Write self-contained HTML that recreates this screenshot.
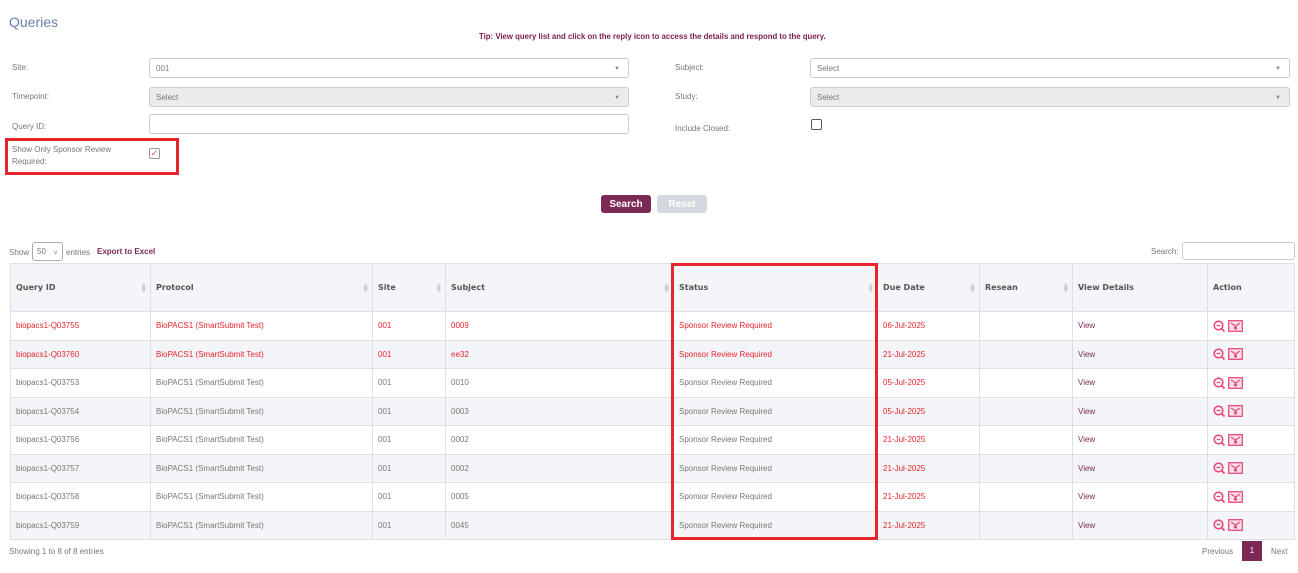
<!DOCTYPE html>
<html><head><meta charset="utf-8"><style>
*{box-sizing:border-box;margin:0;padding:0}
body{width:1298px;height:573px;background:#fff;font-family:"Liberation Sans",sans-serif;position:relative;overflow:hidden;color:#777}
.a{position:absolute}
.lbl{font-size:8px;color:#777}
.inp{position:absolute;border:1px solid #ccc;border-radius:3px;height:20px;font-size:8px;color:#777;padding:5px 0 0 6px;background:#fff}
.dis{background:#ebebeb}
.arr{position:absolute;right:8px;top:7px;font-size:6px;color:#888}
table{position:absolute;left:10px;top:263px;border-collapse:collapse;width:1284px;font-size:8px;table-layout:fixed}
td,th{border:1px solid #dde0e4;padding:0 5px;text-align:left;height:28.5px}
th{height:48px;background:#f3f5f8;color:#555;font-weight:bold;font-family:"DejaVu Sans",sans-serif;font-size:8px;position:relative}
th .s{position:absolute;right:4px;top:19px;font-size:6px;color:#ccc;line-height:5px}
tr.g td{background:#f3f5f8}
.r td{color:#e8242c}
.d{color:#e8242c}
.v{color:#7b2a55}
.ic{display:inline-block;vertical-align:middle}
</style></head><body>
<div class="a" style="left:9px;top:14px;font-size:14px;color:#6a80a8">Queries</div>
<div class="a" style="left:479px;top:32px;font-size:7.8px;color:#7b1e4e;font-weight:bold">Tip: View query list and click on the reply icon to access the details and respond to the query.</div>

<div class="a lbl" style="left:12px;top:63px">Site:</div>
<div class="inp" style="left:149px;top:58px;width:480px">001<span class="arr">▼</span></div>
<div class="a lbl" style="left:12px;top:92px">Timepoint:</div>
<div class="inp dis" style="left:149px;top:87px;width:480px">Select<span class="arr">▼</span></div>
<div class="a lbl" style="left:12px;top:122px">Query ID:</div>
<div class="inp" style="left:149px;top:114px;width:480px"></div>

<div class="a lbl" style="left:675px;top:63px">Subject:</div>
<div class="inp" style="left:810px;top:58px;width:480px">Select<span class="arr">▼</span></div>
<div class="a lbl" style="left:675px;top:92px">Study:</div>
<div class="inp dis" style="left:810px;top:87px;width:480px">Select<span class="arr">▼</span></div>
<div class="a lbl" style="left:675px;top:124px">Include Closed:</div>
<div class="a" style="left:811px;top:119px;width:11px;height:11px;border:1px solid #555;border-radius:2px"></div>

<div class="a" style="left:5px;top:138px;width:174px;height:37px;border:3px solid #e8242c"></div>
<div class="a lbl" style="left:12px;top:144px;line-height:12px">Show Only Sponsor Review<br>Required:</div>
<div class="a" style="left:149px;top:148px;width:11px;height:11px;border:1px solid #999;border-radius:2px;font-size:9px;color:#e8446c;line-height:9px;text-align:center">✓</div>

<div class="a" style="left:601px;top:195px;width:50px;height:18px;background:#7b2a55;border-radius:3px;color:#fff;font-size:10px;font-weight:bold;text-align:center;line-height:19px">Search</div>
<div class="a" style="left:657px;top:195px;width:50px;height:18px;background:#d4d8df;border-radius:3px;color:#fff;font-size:10px;font-weight:bold;text-align:center;line-height:19px">Reset</div>

<div class="a lbl" style="left:9px;top:248px">Show</div>
<div class="a" style="left:32px;top:242px;width:31px;height:19px;border:1px solid #aaa;border-radius:3px;font-size:8px;padding:4px 0 0 4px">50 <span style="font-size:6px;margin-left:6px">v</span></div>
<div class="a lbl" style="left:66px;top:248px">entries</div>
<div class="a" style="left:97px;top:247px;font-size:8px;font-weight:bold;color:#7b2a55">Export to Excel</div>
<div class="a lbl" style="left:1151px;top:247px">Search:</div>
<div class="a" style="left:1182px;top:242px;width:113px;height:18px;border:1px solid #ccc;border-radius:3px"></div>

<table>
<colgroup><col style="width:140px"><col style="width:222px"><col style="width:73px"><col style="width:228px"><col style="width:204px"><col style="width:102px"><col style="width:93px"><col style="width:135px"><col style="width:87px"></colgroup>
<tr><th>Query ID<span class="s">▲<br>▼</span></th><th>Protocol<span class="s">▲<br>▼</span></th><th>Site<span class="s">▲<br>▼</span></th><th>Subject<span class="s">▲<br>▼</span></th><th>Status<span class="s">▲<br>▼</span></th><th>Due Date<span class="s">▲<br>▼</span></th><th>Resean<span class="s">▲<br>▼</span></th><th>View Details</th><th>Action</th></tr>
<tr class="r"><td>biopacs1-Q03755</td><td>BioPACS1 (SmartSubmit Test)</td><td>001</td><td>0009</td><td>Sponsor Review Required</td><td>06-Jul-2025</td><td></td><td class="v" style="color:#7b2a55">View</td><td>ICON</td></tr>
<tr class="r g"><td>biopacs1-Q03760</td><td>BioPACS1 (SmartSubmit Test)</td><td>001</td><td>ee32</td><td>Sponsor Review Required</td><td>21-Jul-2025</td><td></td><td style="color:#7b2a55">View</td><td>ICON</td></tr>
<tr><td>biopacs1-Q03753</td><td>BioPACS1 (SmartSubmit Test)</td><td>001</td><td>0010</td><td>Sponsor Review Required</td><td class="d">05-Jul-2025</td><td></td><td class="v">View</td><td>ICON</td></tr>
<tr class="g"><td>biopacs1-Q03754</td><td>BioPACS1 (SmartSubmit Test)</td><td>001</td><td>0003</td><td>Sponsor Review Required</td><td class="d">05-Jul-2025</td><td></td><td class="v">View</td><td>ICON</td></tr>
<tr><td>biopacs1-Q03756</td><td>BioPACS1 (SmartSubmit Test)</td><td>001</td><td>0002</td><td>Sponsor Review Required</td><td class="d">21-Jul-2025</td><td></td><td class="v">View</td><td>ICON</td></tr>
<tr class="g"><td>biopacs1-Q03757</td><td>BioPACS1 (SmartSubmit Test)</td><td>001</td><td>0002</td><td>Sponsor Review Required</td><td class="d">21-Jul-2025</td><td></td><td class="v">View</td><td>ICON</td></tr>
<tr><td>biopacs1-Q03758</td><td>BioPACS1 (SmartSubmit Test)</td><td>001</td><td>0005</td><td>Sponsor Review Required</td><td class="d">21-Jul-2025</td><td></td><td class="v">View</td><td>ICON</td></tr>
<tr class="g"><td>biopacs1-Q03759</td><td>BioPACS1 (SmartSubmit Test)</td><td>001</td><td>0045</td><td>Sponsor Review Required</td><td class="d">21-Jul-2025</td><td></td><td class="v">View</td><td>ICON</td></tr>
</table>
<div class="a" style="left:671px;top:263px;width:207px;height:277px;border:3px solid #e8242c"></div>

<div class="a lbl" style="left:9px;top:547px">Showing 1 to 8 of 8 entries</div>
<div class="a lbl" style="left:1202px;top:547px">Previous</div>
<div class="a" style="left:1242px;top:541px;width:20px;height:20px;background:#7b2a55;color:#fff;font-size:8px;text-align:center;line-height:20px">1</div>
<div class="a lbl" style="left:1271px;top:547px">Next</div>
<script>
var ic='<svg class="ic" width="13" height="12" viewBox="0 0 13 12"><circle cx="5.5" cy="5.5" r="4.3" fill="none" stroke="#e84a7a" stroke-width="1.6"/><line x1="3.5" y1="5.5" x2="7.5" y2="5.5" stroke="#e84a7a" stroke-width="1.3"/><line x1="8.5" y1="8.5" x2="11.5" y2="11.5" stroke="#e84a7a" stroke-width="1.8"/></svg> <svg class="ic" width="15" height="12" viewBox="0 0 15 12"><rect x="0.7" y="0.7" width="13.6" height="10.6" fill="#fbe0ea" stroke="#e84a7a" stroke-width="1.3"/><path d="M3 3 L7.5 6 L12 3" fill="none" stroke="#e84a7a" stroke-width="1.2"/><circle cx="7.5" cy="8" r="1.6" fill="#e84a7a"/></svg>';
document.querySelectorAll('td').forEach(function(t){if(t.textContent=='ICON')t.innerHTML=ic;});
</script>
</body></html>
